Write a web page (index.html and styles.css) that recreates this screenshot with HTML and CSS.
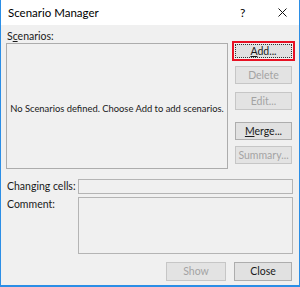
FILE: index.html
```html
<!DOCTYPE html>
<html>
<head>
<meta charset="utf-8">
<link rel="stylesheet" href="styles.css">
</head>
<body>
<div class="window">
  <div class="titlebar">
    <span class="title">Scenario Manager</span>
    <span class="help">?</span>
    <span class="close-x">
      <svg width="9" height="9" viewBox="0 0 9 9"><path d="M0.5 0.5 L8.5 8.5 M8.5 0.5 L0.5 8.5" stroke="#111" stroke-width="1" fill="none"/></svg>
    </span>
  </div>
  <div class="content">
    <div class="label-top">S<u>c</u>enarios:</div>
    <div class="main-row">
      <div class="listbox">No Scenarios defined. Choose Add to add scenarios.</div>
      <div class="side-buttons">
        <div class="focus-ring"><button class="btn btn-focus"><u>A</u>dd...</button></div>
        <button class="btn disabled">Delete</button>
        <button class="btn disabled">Edit...</button>
        <button class="btn btn-merge"><u>M</u>erge...</button>
        <button class="btn disabled">Summary...</button>
      </div>
    </div>
    <div class="field-row">
      <span class="field-label">Changing cells:</span>
      <div class="input"></div>
    </div>
    <div class="field-row comment-row">
      <span class="field-label">Comment:</span>
      <div class="textarea"></div>
    </div>
    <div class="bottom-row">
      <button class="btn disabled btn-show">Show</button>
      <button class="btn btn-close">Close</button>
    </div>
  </div>
</div>
</body>
</html>
```
FILE: styles.css
```css
* { box-sizing: border-box; }
html, body { margin: 0; padding: 0; }
body {
  width: 300px;
  height: 287px;
  font-family: "Lato", "Open Sans", sans-serif;
  font-size: 10.5px;
  color: #1a1a1a;
  background: #fff;
  overflow: hidden;
}
.window {
  width: 300px;
  height: 287px;
  border: 1px solid #2b8ee6;
  border-top: none;
  border-bottom: 2px solid #2b8ee6;
  display: flex;
  flex-direction: column;
  background: #f0f0f0;
  overflow: hidden;
}
.titlebar {
  height: 25px;
  flex: none;
  background: #fff;
  display: flex;
  align-items: center;
  padding-left: 7px;
  font-size: 11.5px;
  color: #000;
}
.title { flex: 1; white-space: nowrap; }
.help { width: 8px; margin-right: 30px; font-size: 12px; }
.close-x { width: 9px; margin-right: 12px; display: flex; }
.content {
  flex: 1;
  padding: 4px 6px 0 5px;
  display: flex;
  flex-direction: column;
}
.label-top { height: 14px; line-height: 14px; white-space: nowrap; padding-left: 1px; }
u { text-decoration: underline; text-underline-offset: 1px; }
.main-row {
  display: flex;
  flex: none;
}
.listbox {
  width: 222px;
  height: 126px;
  flex: none;
  border: 1px solid #acacac;
  display: flex;
  align-items: center;
  justify-content: center;
  font-size: 9.4px;
  white-space: nowrap;
  overflow: hidden;
  padding-top: 5px;
}
.side-buttons {
  margin-left: 4px;
  display: flex;
  flex-direction: column;
  width: 63px;
  flex: none;
}
.btn {
  font-family: inherit;
  font-size: 10.5px;
  width: 57px;
  height: 18px;
  padding: 0;
  background: #e1e1e1;
  border: 1px solid #adadad;
  color: #1a1a1a;
  line-height: 15px;
  white-space: nowrap;
}
.focus-ring {
  width: 63px;
  height: 20px;
  border: 2px solid #e81123;
  margin-top: -2px;
  padding: 1px;
}
.btn-focus {
  width: 57px;
  height: 14px;
  border: 1px dotted #333;
  line-height: 11px;
  background: #e1e1e1;
}
.side-buttons .btn:not(.btn-focus) { margin-left: 3px; }
.disabled {
  color: #a3a3a3;
  background: #e3e3e3;
  border-color: #c6c6c6;
}
.side-buttons .btn:nth-child(2) { margin-top: 5px; }
.side-buttons .btn:nth-child(3) { margin-top: 8px; }
.side-buttons .btn-merge { margin-top: 12px; }
.side-buttons .btn:nth-child(5) { margin-top: 6px; }
.field-row {
  display: flex;
  align-items: flex-start;
  margin-top: 10px;
  flex: none;
}
.field-label { width: 72px; line-height: 14px; white-space: nowrap; padding-left: 1px; }
.input {
  width: 215px;
  height: 15px;
  border: 1px solid #b4b4b4;
}
.comment-row { margin-top: 3px; }
.textarea {
  width: 215px;
  height: 57px;
  border: 1px solid #b4b4b4;
}
.bottom-row {
  display: flex;
  justify-content: flex-end;
  margin-top: 8px;
  padding-right: 1px;
  flex: none;
}
.btn-show { width: 60px; height: 19px; margin-right: 8px; }
.btn-close { width: 58px; height: 19px; }
```
